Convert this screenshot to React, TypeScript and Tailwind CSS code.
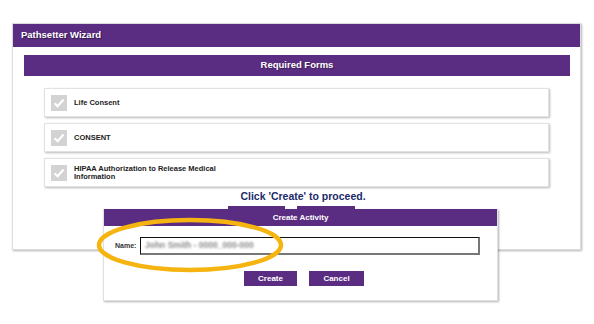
import React from "react";

const Check = () => (
  <div className="w-[16px] h-[16px] bg-[#d3d3d3] flex items-center justify-center shrink-0">
    <svg width="12" height="10" viewBox="0 0 12 10">
      <path d="M1.5 5.2 L4.6 8.2 L10.6 1.6" fill="none" stroke="#ffffff" strokeWidth="2.2" />
    </svg>
  </div>
);

const Row = ({ children }: { children: React.ReactNode }) => (
  <div className="ml-[31px] w-[505px] h-[29px] bg-white border border-[#e2e2e2] shadow-[1px_1px_2px_rgba(0,0,0,0.28)] flex items-center pl-[6px] gap-[7px]">
    <Check />
    <div className="text-[7.5px] leading-[7.5px] font-bold text-[#222] w-[150px]">{children}</div>
  </div>
);

export default function App() {
  return (
    <div
      className="relative w-[594px] h-[324px] bg-white overflow-hidden"
      style={{ fontFamily: '"Liberation Sans", Arial, sans-serif' }}
    >
      <div className="ml-[12px] mt-[23px] w-[569px] h-[227px] bg-white border border-[#dcdcdc] shadow-[1px_1px_2px_rgba(0,0,0,0.3)] flex flex-col">
        <div className="h-[23px] bg-[#5a2d82] flex items-center pl-[8px] text-white font-bold text-[9.5px] [text-shadow:1px_1px_1px_rgba(0,0,0,0.45)]">
          Pathsetter Wizard
        </div>
        <div className="pt-[8px] flex flex-col">
          <div className="ml-[11px] w-[546px] h-[21px] bg-[#5a2d82] flex items-center justify-center text-white font-bold text-[9.5px] [text-shadow:1px_1px_1px_rgba(0,0,0,0.35)]">
            Required Forms
          </div>
          <div className="mt-[12px] flex flex-col gap-[6px]">
            <Row>Life Consent</Row>
            <Row>CONSENT</Row>
            <Row>HIPAA Authorization to Release Medical Information</Row>
          </div>
          <div className="mt-[3px] pl-[13px] text-center text-[10.5px] leading-[12px] font-bold text-[#1b2a6a]">
            Click 'Create' to proceed.
          </div>
        </div>
      </div>

      <div className="absolute left-[228px] top-[206px] w-[57px] h-[6px] bg-[#5a2d82]" />
      <div className="absolute left-[297px] top-[206px] w-[58px] h-[6px] bg-[#5a2d82]" />

      <div className="absolute left-[103px] top-[209px] w-[395px] h-[92px] bg-white border border-[#e0e0e0] border-t-0 shadow-[1px_1px_2px_rgba(0,0,0,0.3)] flex flex-col">
        <div className="h-[17px] bg-[#5a2d82] flex items-center justify-center text-white font-bold text-[8px]">
          Create Activity
        </div>
        <div className="pt-[11px] pl-[11px] flex items-center gap-[4px]">
          <span className="text-[7px] font-bold text-[#333] w-[21px]">Name:</span>
          <div className="w-[340px] h-[18px] border border-t-[#111] border-l-[#111] border-r-2 border-r-[#777] border-b-2 border-b-[#777] flex items-center pl-[4px]">
            <span className="text-[8.5px] font-bold text-[#8a8a8a] blur-[0.8px]">John Smith - 0000_000-000</span>
          </div>
        </div>
        <div className="mt-[16px] flex justify-center gap-[12px] pl-[7px]">
          <div className="w-[53px] h-[15px] bg-[#5a2d82] text-white font-bold text-[8px] flex items-center justify-center">
            Create
          </div>
          <div className="w-[55px] h-[15px] bg-[#5a2d82] text-white font-bold text-[8px] flex items-center justify-center">
            Cancel
          </div>
        </div>
      </div>

      <svg className="absolute left-0 top-0 pointer-events-none" width="594" height="324">
        <ellipse cx="190" cy="245" rx="91" ry="25" fill="none" stroke="#f5b40f" strokeWidth="4.5" />
      </svg>
    </div>
  );
}
